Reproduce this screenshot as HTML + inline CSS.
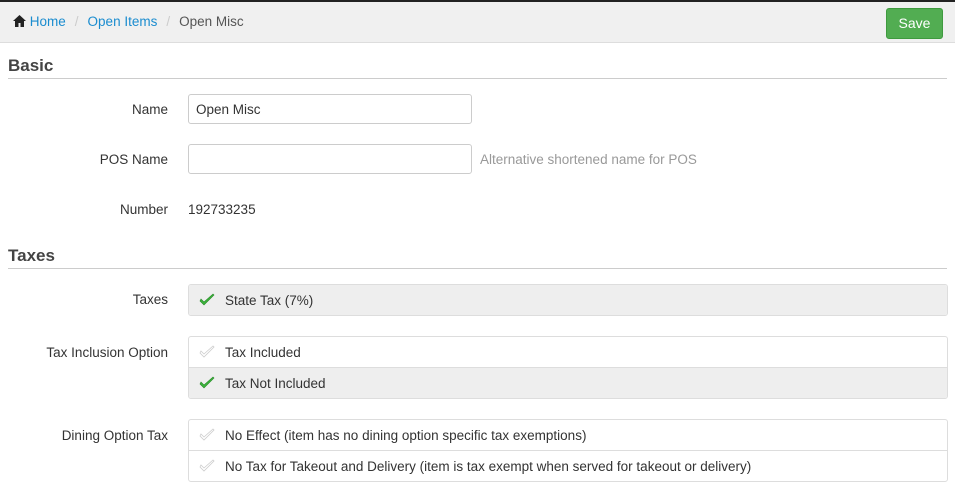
<!DOCTYPE html>
<html><head><style>
*{box-sizing:border-box;margin:0;padding:0}
body{width:955px;height:493px;overflow:hidden;background:#fff;font-family:"Liberation Sans",sans-serif;font-size:13.5px;color:#333;position:relative}
.hdr{position:absolute;left:0;top:0;width:955px;height:43px;background:#f0f0f0;border-top:2px solid #222;border-bottom:1px solid #ddd}
.bc{position:absolute;left:13px;top:12px;font-size:13.5px}
.bc a{color:#1a8ccf;text-decoration:none}
.bc .s{color:#ccc;margin:0 9px}
.save{position:absolute;left:886px;top:6px;width:57px;height:31px;background:#52ad52;border:1px solid #3f9a3f;border-radius:3px;color:#fff;font-size:14px;text-align:center;line-height:29px}
h2{position:absolute;left:8px;width:939px;font-size:17px;font-weight:bold;color:#444;border-bottom:1px solid #ccc;padding-bottom:2px}
.lbl{position:absolute;right:787px;text-align:right}
.inp{position:absolute;left:188px;width:284px;height:30px;border:1px solid #ccc;border-radius:3px;padding:7px 7px}
.txt{position:absolute}
.box{position:absolute;left:188px;width:760px;border:1px solid #ddd;border-radius:3px;overflow:hidden}
.row{height:31px;padding-left:36px;line-height:31px;position:relative;border-top:1px solid #ddd}
.row:first-child{border-top:none;height:30px}
.row.on{background:#eee}
.row svg{position:absolute;left:10px;top:8px}
</style></head><body>
<div class="hdr"><div class="bc"><svg width="13" height="12" viewBox="0 0 13 12" style="vertical-align:-1px"><path d="M6.5 0L0 6h2v6h3.5V8h2v4H11V6h2z" fill="#222"/></svg> <a>Home</a><span class="s">/</span><a>Open Items</a><span class="s">/</span><span style="color:#555">Open Misc</span></div><div class="save">Save</div></div>
<h2 style="top:56px">Basic</h2>
<div class="lbl" style="top:102px">Name</div>
<div class="inp" style="top:94px">Open Misc</div>
<div class="lbl" style="top:152px">POS Name</div>
<div class="inp" style="top:144px"></div>
<div class="txt" style="left:480px;top:152px;color:#999">Alternative shortened name for POS</div>
<div class="lbl" style="top:202px">Number</div>
<div class="txt" style="left:188px;top:202px">192733235</div>
<h2 style="top:246px">Taxes</h2>
<div class="lbl" style="top:292px">Taxes</div>
<div class="box" style="top:284px"><div class="row on"><svg width="16" height="14" viewBox="0 0 16 14"><path d="M1 8l4 4L15 2l-1-1-9 8-3-3z" fill="#3bb33b" stroke="#2a8a2a" stroke-width=".6"/></svg>State Tax (7%)</div></div>
<div class="lbl" style="top:345px">Tax Inclusion Option</div>
<div class="box" style="top:336px"><div class="row"><svg width="16" height="14" viewBox="0 0 16 14"><path d="M1 8l4 4L15 2l-1-1-9 8-3-3z" fill="none" stroke="#ccc" stroke-width=".8"/></svg>Tax Included</div><div class="row on"><svg width="16" height="14" viewBox="0 0 16 14"><path d="M1 8l4 4L15 2l-1-1-9 8-3-3z" fill="#3bb33b" stroke="#2a8a2a" stroke-width=".6"/></svg>Tax Not Included</div></div>
<div class="lbl" style="top:428px">Dining Option Tax</div>
<div class="box" style="top:419px"><div class="row"><svg width="16" height="14" viewBox="0 0 16 14"><path d="M1 8l4 4L15 2l-1-1-9 8-3-3z" fill="none" stroke="#ccc" stroke-width=".8"/></svg>No Effect (item has no dining option specific tax exemptions)</div><div class="row"><svg width="16" height="14" viewBox="0 0 16 14"><path d="M1 8l4 4L15 2l-1-1-9 8-3-3z" fill="none" stroke="#ccc" stroke-width=".8"/></svg>No Tax for Takeout and Delivery (item is tax exempt when served for takeout or delivery)</div></div>
</body></html>
